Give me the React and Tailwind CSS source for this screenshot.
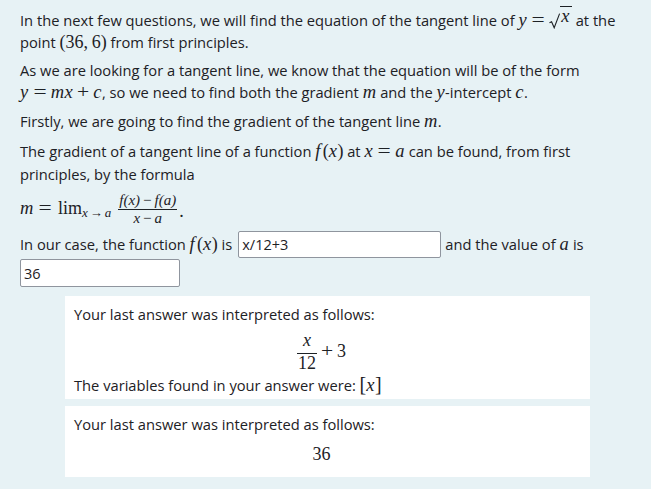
import React from "react";

const M = ({ children, className = "" }) => (
  <span className={`font-['Liberation_Serif',serif] italic text-[18.5px] leading-none tracking-[0.4px] ${className}`}>{children}</span>
);

const R = ({ children, className = "" }) => (
  <span className={`font-['Liberation_Serif',serif] text-[18px] leading-none ${className}`}>{children}</span>
);

const Eq = () => <R className="inline-block mx-[6px] scale-x-[1.3]">=</R>;
const Plus = () => <R className="inline-block mx-[5px] scale-x-[1.2]">+</R>;

const Sqrt = () => (
  <span className="inline-flex items-end align-baseline leading-none">
    <svg width="11" height="16" viewBox="0 0 11 16" className="relative top-[3px]">
      <path d="M0.5 9.8 L2.6 8.7 L5.2 14.8 L10.6 0.6" fill="none" stroke="#1d2125" strokeWidth="1.1" />
    </svg>
    <span className="border-t border-[#1d2125] leading-[14px] pr-[2px] pl-[1px]">
      <M>x</M>
    </span>
  </span>
);

const Fx = () => (
  <>
    <M className="mr-[2px]">f</M>
    <R>(</R>
    <M>x</M>
    <R>)</R>
  </>
);

const Feedback = ({ children }) => (
  <div className="ml-[45px] w-[525px] bg-white px-[9px] pt-[7px]">{children}</div>
);

const App = () => {
  return (
    <div className="w-[651px] h-[489px] bg-[#e7f2f5] text-[#1d2125] font-['Open_Sans',sans-serif] text-[14.7px] leading-[22.5px] pl-[20px] pt-[6px] overflow-hidden">
      <p className="mb-[5px] whitespace-nowrap">
        In the next few questions, we will find the equation of the tangent line of <M>y</M>
        <Eq />
        <Sqrt /> at the
        <br />
        point <R>(36,&thinsp;6)</R> from first principles.
      </p>
      <p className="mb-[6px] whitespace-nowrap">
        As we are looking for a tangent line, we know that the equation will be of the form
        <br />
        <M>y</M>
        <Eq />
        <M>mx</M>
        <Plus />
        <M>c</M>, so we need to find both the gradient <M>m</M> and the <M>y</M>-intercept <M>c</M>.
      </p>
      <p className="mb-[8px]">
        Firstly, we are going to find the gradient of the tangent line <M>m</M>.
      </p>
      <p className="whitespace-nowrap">
        The gradient of a tangent line of a function <Fx /> at <M>x</M>
        <Eq />
        <M>a</M> can be found, from first
        <br />
        principles, by the formula
      </p>
      <div className="flex items-center h-[46px]">
        <M>m</M>
        <Eq />
        <R className="ml-[2px]">lim</R>
        <span className="font-['Liberation_Serif',serif] italic text-[13px] relative top-[5px]">
          x<span className="not-italic mx-[2px]">→</span>a
        </span>
        <span className="inline-flex flex-col items-center ml-[7px] mr-[2px] font-['Liberation_Serif',serif] italic text-[15px] leading-[15px] relative top-[1px]">
          <span className="px-[1px] pb-[1px]">
            f(x)<span className="not-italic mx-[3px]">−</span>f(a)
          </span>
          <span className="w-full border-t border-[#1d2125]"></span>
          <span className="pt-[1px]">
            x<span className="not-italic mx-[3px]">−</span>a
          </span>
        </span>
        <R className="relative top-[3px]">.</R>
      </div>
      <div className="flex flex-wrap items-center w-[620px]">
        <span>
          In our case, the function <Fx /> is
        </span>
        <input
          readOnly
          value="x/12+3"
          className="ml-[6px] mr-[4px] w-[203px] h-[27px] bg-white border border-[#8f959e] rounded-[2px] px-[3px] font-['Open_Sans',sans-serif] text-[14.5px] text-[#1d2125] outline-none"
        />
        <span>
          and the value of <M>a</M> is
        </span>
        <input
          readOnly
          value="36"
          className="mt-[1px] w-[160px] h-[28px] bg-white border border-[#8f959e] rounded-[2px] px-[3px] font-['Open_Sans',sans-serif] text-[14.5px] text-[#1d2125] outline-none"
        />
      </div>
      <div className="mt-[9px] flex flex-col gap-[7px]">
        <Feedback>
          <div>Your last answer was interpreted as follows:</div>
          <div className="flex justify-center items-center h-[48px] pr-[12px]">
            <span className="inline-flex flex-col items-center font-['Liberation_Serif',serif] text-[18px] leading-[18px] relative top-[2px]">
              <span className="italic px-[3px] pb-[4px]">x</span>
              <span className="w-full border-t border-[#1d2125]"></span>
              <span className="px-[1px]">12</span>
            </span>
            <R className="inline-block ml-[5px] scale-x-[1.2] relative top-[1px]">+</R>
            <R className="ml-[5px] relative top-[1px]">3</R>
          </div>
          <div className="pb-[3px]">
            The variables found in your answer were: <R className="text-[20px]">[</R>
            <M>x</M>
            <R className="text-[20px]">]</R>
          </div>
        </Feedback>
        <Feedback>
          <div>Your last answer was interpreted as follows:</div>
          <div className="flex justify-center h-[37px] items-center pr-[12px]">
            <R>36</R>
          </div>
          <div className="h-[4px]"></div>
        </Feedback>
      </div>
    </div>
  );
};

export default App;
